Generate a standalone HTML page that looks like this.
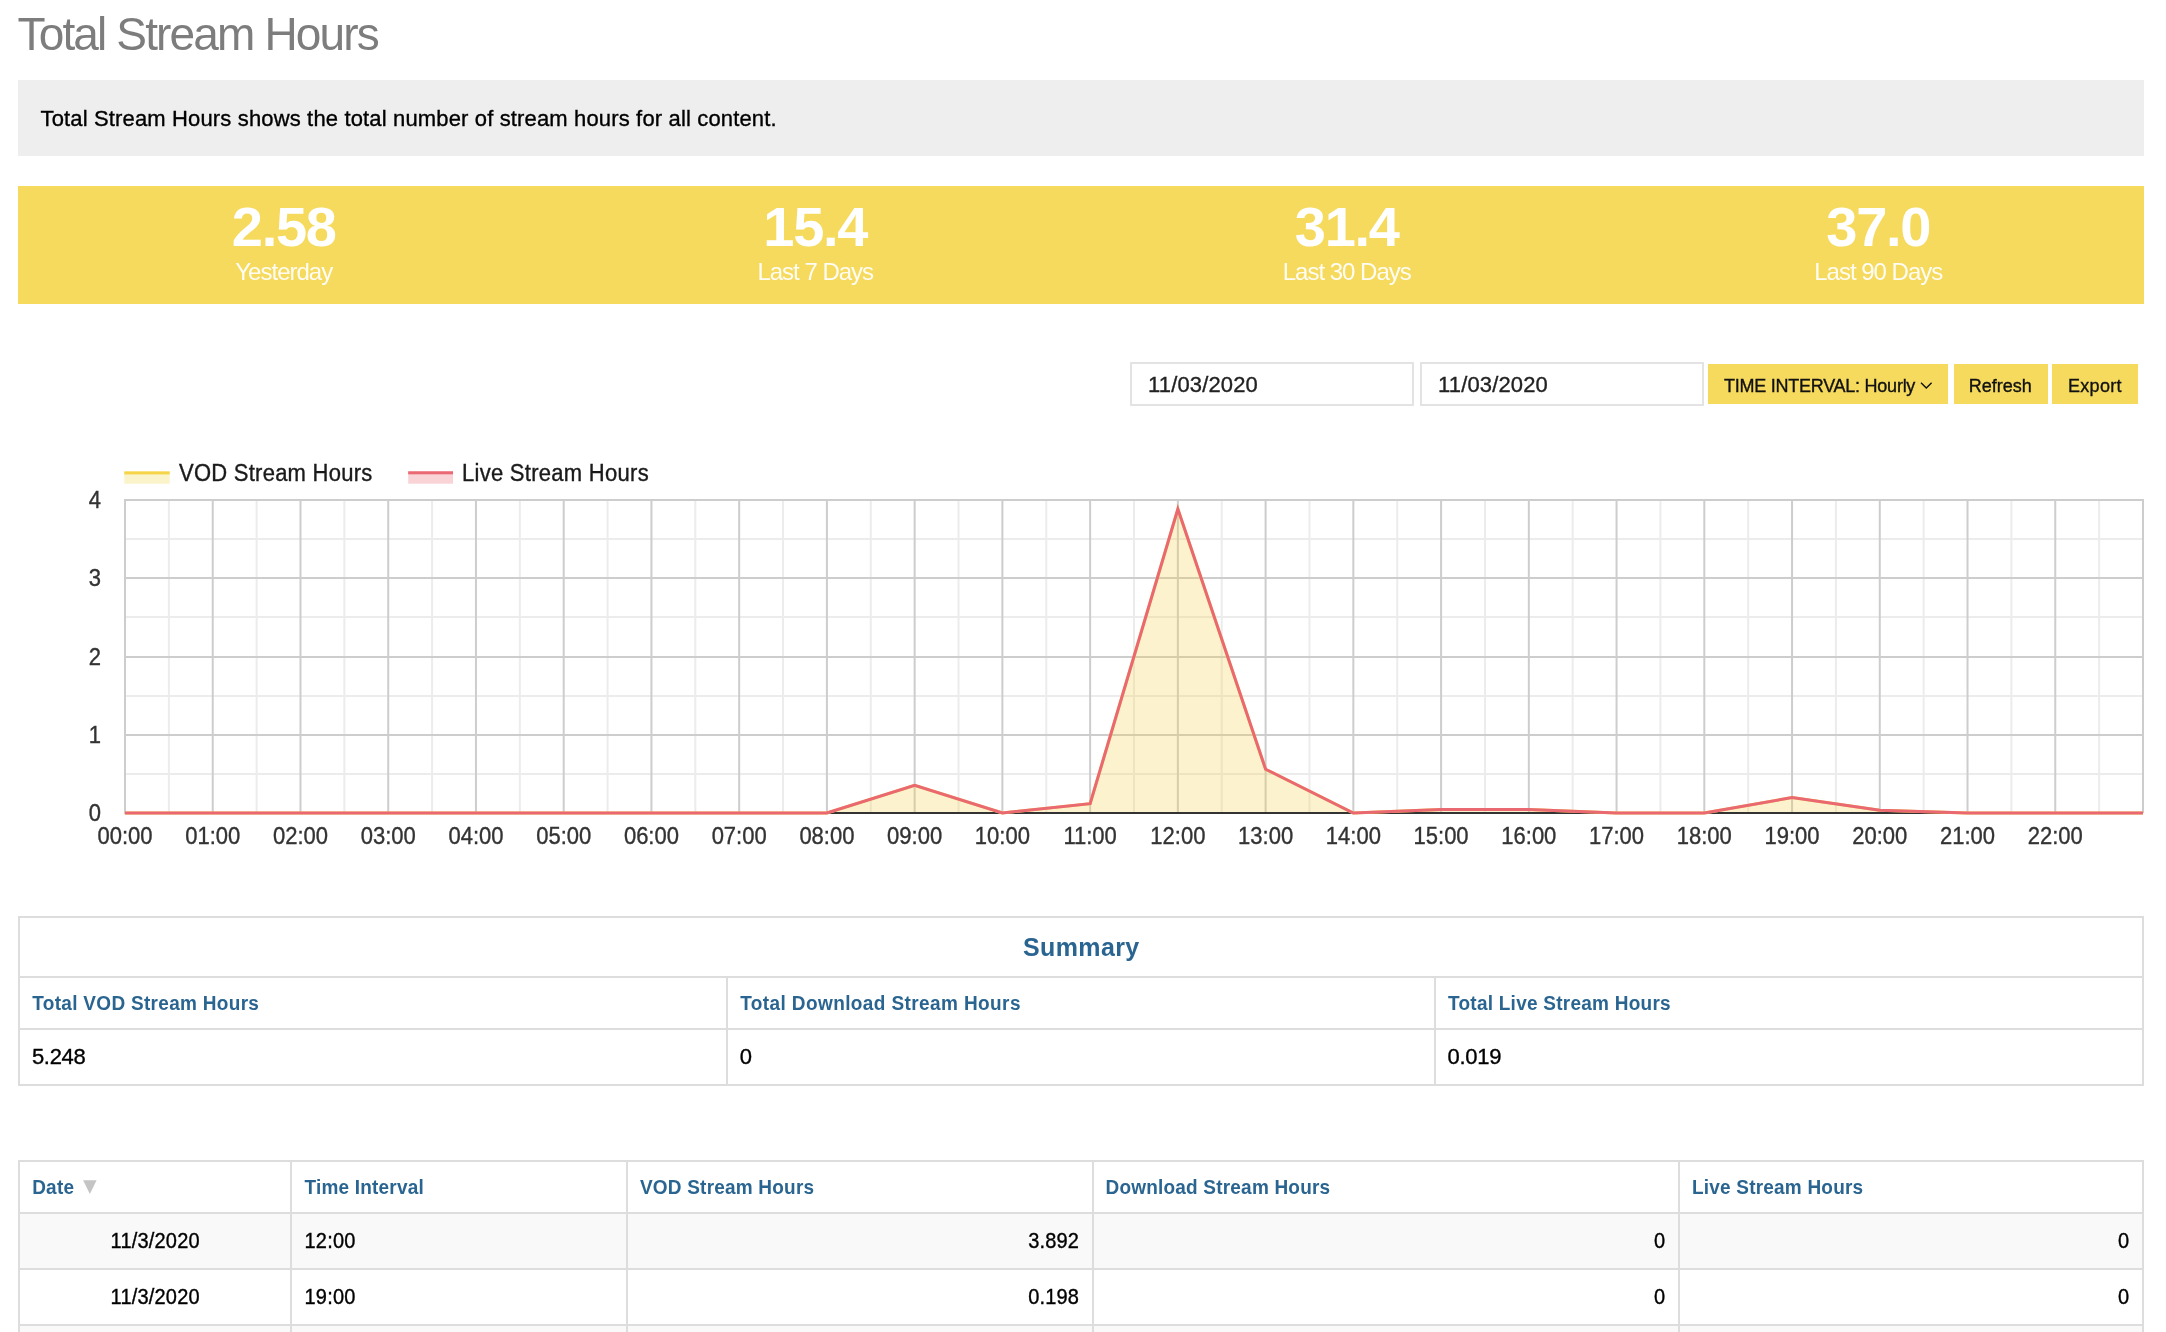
<!DOCTYPE html>
<html><head><meta charset="utf-8"><title>Total Stream Hours</title>
<style>
html,body{margin:0;padding:0;background:#fff;}
body{will-change:transform;width:2166px;height:1332px;position:relative;overflow:hidden;font-family:"Liberation Sans",sans-serif;}
.t{position:absolute;white-space:nowrap;}
.k{-webkit-text-stroke:0.35px currentColor;}
.r{position:absolute;}
svg{position:absolute;left:0;top:0;}
</style></head><body>
<div class="t" style="left:17.50px;top:11.06px;font-size:46px;line-height:46px;color:#7d7d7d;font-weight:normal;letter-spacing:-1.85px;">Total Stream Hours</div>
<div class="r" style="left:18px;top:80px;width:2126px;height:76px;background:#eeeeee;"></div>
<div class="t k" style="left:40.50px;top:107.58px;font-size:22px;line-height:22px;color:#000;font-weight:normal;letter-spacing:0.15px;">Total Stream Hours shows the total number of stream hours for all content.</div>
<div class="r" style="left:18px;top:186px;width:2126px;height:118px;background:#F6DA5E;"></div>
<div class="t" style="left:-316.25px;width:1200px;text-align:center;top:199.30px;font-size:56px;line-height:56px;color:#fff;font-weight:bold;letter-spacing:-1.25px;">2.58</div>
<div class="t" style="left:-316.25px;width:1200px;text-align:center;top:259.68px;font-size:24px;line-height:24px;color:rgba(255,255,255,0.93);font-weight:normal;letter-spacing:-1px;">Yesterday</div>
<div class="t" style="left:215.25px;width:1200px;text-align:center;top:199.30px;font-size:56px;line-height:56px;color:#fff;font-weight:bold;letter-spacing:-1.25px;">15.4</div>
<div class="t" style="left:215.25px;width:1200px;text-align:center;top:259.68px;font-size:24px;line-height:24px;color:rgba(255,255,255,0.93);font-weight:normal;letter-spacing:-1px;">Last 7 Days</div>
<div class="t" style="left:746.75px;width:1200px;text-align:center;top:199.30px;font-size:56px;line-height:56px;color:#fff;font-weight:bold;letter-spacing:-1.25px;">31.4</div>
<div class="t" style="left:746.75px;width:1200px;text-align:center;top:259.68px;font-size:24px;line-height:24px;color:rgba(255,255,255,0.93);font-weight:normal;letter-spacing:-1px;">Last 30 Days</div>
<div class="t" style="left:1278.25px;width:1200px;text-align:center;top:199.30px;font-size:56px;line-height:56px;color:#fff;font-weight:bold;letter-spacing:-1.25px;">37.0</div>
<div class="t" style="left:1278.25px;width:1200px;text-align:center;top:259.68px;font-size:24px;line-height:24px;color:rgba(255,255,255,0.93);font-weight:normal;letter-spacing:-1px;">Last 90 Days</div>
<div class="r" style="left:1130px;top:362px;width:284px;height:44px;background:#fff;box-sizing:border-box;border:2px solid #e3e3e3;"></div>
<div class="t k" style="left:1148.00px;top:374.18px;font-size:22px;line-height:22px;color:#222;font-weight:normal;letter-spacing:0.15px;">11/03/2020</div>
<div class="r" style="left:1420px;top:362px;width:284px;height:44px;background:#fff;box-sizing:border-box;border:2px solid #e3e3e3;"></div>
<div class="t k" style="left:1438.00px;top:374.18px;font-size:22px;line-height:22px;color:#222;font-weight:normal;letter-spacing:0.15px;">11/03/2020</div>
<div class="r" style="left:1708px;top:364px;width:240px;height:40px;background:#F6DA5E;"></div>
<div class="t k" style="left:1724.00px;top:376.56px;font-size:18px;line-height:18px;color:#111;font-weight:normal;letter-spacing:-0.25px;">TIME INTERVAL: Hourly</div>
<svg width="2166" height="1332" style="pointer-events:none"><polyline points="1921,382.7 1926.3,388 1931.6,382.7" fill="none" stroke="#111" stroke-width="1.4"/></svg>
<div class="r" style="left:1954px;top:364px;width:94px;height:40px;background:#F6DA5E;"></div>
<div class="t k" style="left:1968.70px;top:376.56px;font-size:18px;line-height:18px;color:#111;font-weight:normal;">Refresh</div>
<div class="r" style="left:2052px;top:364px;width:86px;height:40px;background:#F6DA5E;"></div>
<div class="t k" style="left:2068.00px;top:376.56px;font-size:18px;line-height:18px;color:#111;font-weight:normal;letter-spacing:0.3px;">Export</div>
<svg width="2166" height="1332">
<line x1="168.87" y1="500" x2="168.87" y2="813" stroke="#ececec" stroke-width="2"/>
<line x1="256.61" y1="500" x2="256.61" y2="813" stroke="#ececec" stroke-width="2"/>
<line x1="344.35" y1="500" x2="344.35" y2="813" stroke="#ececec" stroke-width="2"/>
<line x1="432.09" y1="500" x2="432.09" y2="813" stroke="#ececec" stroke-width="2"/>
<line x1="519.83" y1="500" x2="519.83" y2="813" stroke="#ececec" stroke-width="2"/>
<line x1="607.57" y1="500" x2="607.57" y2="813" stroke="#ececec" stroke-width="2"/>
<line x1="695.30" y1="500" x2="695.30" y2="813" stroke="#ececec" stroke-width="2"/>
<line x1="783.04" y1="500" x2="783.04" y2="813" stroke="#ececec" stroke-width="2"/>
<line x1="870.78" y1="500" x2="870.78" y2="813" stroke="#ececec" stroke-width="2"/>
<line x1="958.52" y1="500" x2="958.52" y2="813" stroke="#ececec" stroke-width="2"/>
<line x1="1046.26" y1="500" x2="1046.26" y2="813" stroke="#ececec" stroke-width="2"/>
<line x1="1134.00" y1="500" x2="1134.00" y2="813" stroke="#ececec" stroke-width="2"/>
<line x1="1221.74" y1="500" x2="1221.74" y2="813" stroke="#ececec" stroke-width="2"/>
<line x1="1309.48" y1="500" x2="1309.48" y2="813" stroke="#ececec" stroke-width="2"/>
<line x1="1397.22" y1="500" x2="1397.22" y2="813" stroke="#ececec" stroke-width="2"/>
<line x1="1484.96" y1="500" x2="1484.96" y2="813" stroke="#ececec" stroke-width="2"/>
<line x1="1572.70" y1="500" x2="1572.70" y2="813" stroke="#ececec" stroke-width="2"/>
<line x1="1660.43" y1="500" x2="1660.43" y2="813" stroke="#ececec" stroke-width="2"/>
<line x1="1748.17" y1="500" x2="1748.17" y2="813" stroke="#ececec" stroke-width="2"/>
<line x1="1835.91" y1="500" x2="1835.91" y2="813" stroke="#ececec" stroke-width="2"/>
<line x1="1923.65" y1="500" x2="1923.65" y2="813" stroke="#ececec" stroke-width="2"/>
<line x1="2011.39" y1="500" x2="2011.39" y2="813" stroke="#ececec" stroke-width="2"/>
<line x1="2099.13" y1="500" x2="2099.13" y2="813" stroke="#ececec" stroke-width="2"/>
<line x1="125" y1="774.00" x2="2143" y2="774.00" stroke="#ececec" stroke-width="2"/>
<line x1="125" y1="696.00" x2="2143" y2="696.00" stroke="#ececec" stroke-width="2"/>
<line x1="125" y1="617.00" x2="2143" y2="617.00" stroke="#ececec" stroke-width="2"/>
<line x1="125" y1="539.00" x2="2143" y2="539.00" stroke="#ececec" stroke-width="2"/>
<line x1="125.00" y1="499" x2="125.00" y2="813" stroke="#cdcdcd" stroke-width="2"/>
<line x1="212.74" y1="499" x2="212.74" y2="813" stroke="#cdcdcd" stroke-width="2"/>
<line x1="300.48" y1="499" x2="300.48" y2="813" stroke="#cdcdcd" stroke-width="2"/>
<line x1="388.22" y1="499" x2="388.22" y2="813" stroke="#cdcdcd" stroke-width="2"/>
<line x1="475.96" y1="499" x2="475.96" y2="813" stroke="#cdcdcd" stroke-width="2"/>
<line x1="563.70" y1="499" x2="563.70" y2="813" stroke="#cdcdcd" stroke-width="2"/>
<line x1="651.43" y1="499" x2="651.43" y2="813" stroke="#cdcdcd" stroke-width="2"/>
<line x1="739.17" y1="499" x2="739.17" y2="813" stroke="#cdcdcd" stroke-width="2"/>
<line x1="826.91" y1="499" x2="826.91" y2="813" stroke="#cdcdcd" stroke-width="2"/>
<line x1="914.65" y1="499" x2="914.65" y2="813" stroke="#cdcdcd" stroke-width="2"/>
<line x1="1002.39" y1="499" x2="1002.39" y2="813" stroke="#cdcdcd" stroke-width="2"/>
<line x1="1090.13" y1="499" x2="1090.13" y2="813" stroke="#cdcdcd" stroke-width="2"/>
<line x1="1177.87" y1="499" x2="1177.87" y2="813" stroke="#cdcdcd" stroke-width="2"/>
<line x1="1265.61" y1="499" x2="1265.61" y2="813" stroke="#cdcdcd" stroke-width="2"/>
<line x1="1353.35" y1="499" x2="1353.35" y2="813" stroke="#cdcdcd" stroke-width="2"/>
<line x1="1441.09" y1="499" x2="1441.09" y2="813" stroke="#cdcdcd" stroke-width="2"/>
<line x1="1528.83" y1="499" x2="1528.83" y2="813" stroke="#cdcdcd" stroke-width="2"/>
<line x1="1616.57" y1="499" x2="1616.57" y2="813" stroke="#cdcdcd" stroke-width="2"/>
<line x1="1704.30" y1="499" x2="1704.30" y2="813" stroke="#cdcdcd" stroke-width="2"/>
<line x1="1792.04" y1="499" x2="1792.04" y2="813" stroke="#cdcdcd" stroke-width="2"/>
<line x1="1879.78" y1="499" x2="1879.78" y2="813" stroke="#cdcdcd" stroke-width="2"/>
<line x1="1967.52" y1="499" x2="1967.52" y2="813" stroke="#cdcdcd" stroke-width="2"/>
<line x1="2055.26" y1="499" x2="2055.26" y2="813" stroke="#cdcdcd" stroke-width="2"/>
<line x1="2143.00" y1="499" x2="2143.00" y2="813" stroke="#cdcdcd" stroke-width="2"/>
<line x1="124" y1="813.00" x2="2143" y2="813.00" stroke="#cdcdcd" stroke-width="2"/>
<line x1="124" y1="735.00" x2="2143" y2="735.00" stroke="#cdcdcd" stroke-width="2"/>
<line x1="124" y1="657.00" x2="2143" y2="657.00" stroke="#cdcdcd" stroke-width="2"/>
<line x1="124" y1="578.00" x2="2143" y2="578.00" stroke="#cdcdcd" stroke-width="2"/>
<line x1="124" y1="500.00" x2="2143" y2="500.00" stroke="#cdcdcd" stroke-width="2"/>
<polygon points="125,813 125.00,813.00 212.74,813.00 300.48,813.00 388.22,813.00 475.96,813.00 563.70,813.00 651.43,813.00 739.17,813.00 826.91,813.00 914.65,785.27 1002.39,813.00 1090.13,803.63 1177.87,509.03 1265.61,769.26 1353.35,813.00 1441.09,809.49 1528.83,809.49 1616.57,813.00 1704.30,813.00 1792.04,797.54 1879.78,810.27 1967.52,813.00 2055.26,813.00 2143.00,813.00 2143,813" fill="rgba(245,212,74,0.27)"/>
<line x1="125" y1="813" x2="2143" y2="813" stroke="#333" stroke-width="1.8"/>
<polyline points="125.00,813.00 212.74,813.00 300.48,813.00 388.22,813.00 475.96,813.00 563.70,813.00 651.43,813.00 739.17,813.00 826.91,813.00 914.65,785.27 1002.39,813.00 1090.13,803.63 1177.87,509.03 1265.61,769.26 1353.35,813.00 1441.09,809.49 1528.83,809.49 1616.57,813.00 1704.30,813.00 1792.04,797.54 1879.78,810.27 1967.52,813.00 2055.26,813.00 2143.00,813.00" fill="none" stroke="#F5D44A" stroke-width="3"/>
<polyline points="125.00,813.00 212.74,813.00 300.48,813.00 388.22,813.00 475.96,813.00 563.70,813.00 651.43,813.00 739.17,813.00 826.91,813.00 914.65,785.27 1002.39,813.00 1090.13,803.63 1177.87,509.03 1265.61,769.26 1353.35,813.00 1441.09,809.49 1528.83,809.49 1616.57,813.00 1704.30,813.00 1792.04,797.54 1879.78,810.27 1967.52,813.00 2055.26,813.00 2143.00,813.00" fill="none" stroke="#EA6871" stroke-width="3" stroke-linejoin="miter"/>
<rect x="124.3" y="471.4" width="45.4" height="12.3" fill="#FBF3C9"/>
<rect x="124.3" y="471.4" width="45.4" height="3" fill="#F5D44A"/>
<rect x="408.2" y="471.3" width="44.8" height="12.4" fill="#FAD3D7"/>
<rect x="408.2" y="471.3" width="44.8" height="3" fill="#EB6972"/>
</svg>
<div class="t k" style="left:179.00px;top:463.38px;font-size:22px;line-height:22px;color:#1a1a1a;font-weight:normal;letter-spacing:0.25px;transform:scaleY(1.05);transform-origin:0 18.62px;">VOD Stream Hours</div>
<div class="t k" style="left:462.00px;top:463.38px;font-size:22px;line-height:22px;color:#1a1a1a;font-weight:normal;letter-spacing:0.28px;transform:scaleY(1.05);transform-origin:0 18.62px;">Live Stream Hours</div>
<div class="t k" style="left:-1099.00px;width:1200px;text-align:right;top:803.18px;font-size:22px;line-height:22px;color:#333;font-weight:normal;transform:scaleY(1.08);transform-origin:0 18.62px;">0</div>
<div class="t k" style="left:-1099.00px;width:1200px;text-align:right;top:725.18px;font-size:22px;line-height:22px;color:#333;font-weight:normal;transform:scaleY(1.08);transform-origin:0 18.62px;">1</div>
<div class="t k" style="left:-1099.00px;width:1200px;text-align:right;top:647.18px;font-size:22px;line-height:22px;color:#333;font-weight:normal;transform:scaleY(1.08);transform-origin:0 18.62px;">2</div>
<div class="t k" style="left:-1099.00px;width:1200px;text-align:right;top:568.18px;font-size:22px;line-height:22px;color:#333;font-weight:normal;transform:scaleY(1.08);transform-origin:0 18.62px;">3</div>
<div class="t k" style="left:-1099.00px;width:1200px;text-align:right;top:490.18px;font-size:22px;line-height:22px;color:#333;font-weight:normal;transform:scaleY(1.08);transform-origin:0 18.62px;">4</div>
<div class="t k" style="left:-475.00px;width:1200px;text-align:center;top:825.58px;font-size:22px;line-height:22px;color:#333;font-weight:normal;transform:scaleY(1.07);transform-origin:0 18.62px;">00:00</div>
<div class="t k" style="left:-387.26px;width:1200px;text-align:center;top:825.58px;font-size:22px;line-height:22px;color:#333;font-weight:normal;transform:scaleY(1.07);transform-origin:0 18.62px;">01:00</div>
<div class="t k" style="left:-299.52px;width:1200px;text-align:center;top:825.58px;font-size:22px;line-height:22px;color:#333;font-weight:normal;transform:scaleY(1.07);transform-origin:0 18.62px;">02:00</div>
<div class="t k" style="left:-211.78px;width:1200px;text-align:center;top:825.58px;font-size:22px;line-height:22px;color:#333;font-weight:normal;transform:scaleY(1.07);transform-origin:0 18.62px;">03:00</div>
<div class="t k" style="left:-124.04px;width:1200px;text-align:center;top:825.58px;font-size:22px;line-height:22px;color:#333;font-weight:normal;transform:scaleY(1.07);transform-origin:0 18.62px;">04:00</div>
<div class="t k" style="left:-36.30px;width:1200px;text-align:center;top:825.58px;font-size:22px;line-height:22px;color:#333;font-weight:normal;transform:scaleY(1.07);transform-origin:0 18.62px;">05:00</div>
<div class="t k" style="left:51.43px;width:1200px;text-align:center;top:825.58px;font-size:22px;line-height:22px;color:#333;font-weight:normal;transform:scaleY(1.07);transform-origin:0 18.62px;">06:00</div>
<div class="t k" style="left:139.17px;width:1200px;text-align:center;top:825.58px;font-size:22px;line-height:22px;color:#333;font-weight:normal;transform:scaleY(1.07);transform-origin:0 18.62px;">07:00</div>
<div class="t k" style="left:226.91px;width:1200px;text-align:center;top:825.58px;font-size:22px;line-height:22px;color:#333;font-weight:normal;transform:scaleY(1.07);transform-origin:0 18.62px;">08:00</div>
<div class="t k" style="left:314.65px;width:1200px;text-align:center;top:825.58px;font-size:22px;line-height:22px;color:#333;font-weight:normal;transform:scaleY(1.07);transform-origin:0 18.62px;">09:00</div>
<div class="t k" style="left:402.39px;width:1200px;text-align:center;top:825.58px;font-size:22px;line-height:22px;color:#333;font-weight:normal;transform:scaleY(1.07);transform-origin:0 18.62px;">10:00</div>
<div class="t k" style="left:490.13px;width:1200px;text-align:center;top:825.58px;font-size:22px;line-height:22px;color:#333;font-weight:normal;transform:scaleY(1.07);transform-origin:0 18.62px;">11:00</div>
<div class="t k" style="left:577.87px;width:1200px;text-align:center;top:825.58px;font-size:22px;line-height:22px;color:#333;font-weight:normal;transform:scaleY(1.07);transform-origin:0 18.62px;">12:00</div>
<div class="t k" style="left:665.61px;width:1200px;text-align:center;top:825.58px;font-size:22px;line-height:22px;color:#333;font-weight:normal;transform:scaleY(1.07);transform-origin:0 18.62px;">13:00</div>
<div class="t k" style="left:753.35px;width:1200px;text-align:center;top:825.58px;font-size:22px;line-height:22px;color:#333;font-weight:normal;transform:scaleY(1.07);transform-origin:0 18.62px;">14:00</div>
<div class="t k" style="left:841.09px;width:1200px;text-align:center;top:825.58px;font-size:22px;line-height:22px;color:#333;font-weight:normal;transform:scaleY(1.07);transform-origin:0 18.62px;">15:00</div>
<div class="t k" style="left:928.83px;width:1200px;text-align:center;top:825.58px;font-size:22px;line-height:22px;color:#333;font-weight:normal;transform:scaleY(1.07);transform-origin:0 18.62px;">16:00</div>
<div class="t k" style="left:1016.57px;width:1200px;text-align:center;top:825.58px;font-size:22px;line-height:22px;color:#333;font-weight:normal;transform:scaleY(1.07);transform-origin:0 18.62px;">17:00</div>
<div class="t k" style="left:1104.30px;width:1200px;text-align:center;top:825.58px;font-size:22px;line-height:22px;color:#333;font-weight:normal;transform:scaleY(1.07);transform-origin:0 18.62px;">18:00</div>
<div class="t k" style="left:1192.04px;width:1200px;text-align:center;top:825.58px;font-size:22px;line-height:22px;color:#333;font-weight:normal;transform:scaleY(1.07);transform-origin:0 18.62px;">19:00</div>
<div class="t k" style="left:1279.78px;width:1200px;text-align:center;top:825.58px;font-size:22px;line-height:22px;color:#333;font-weight:normal;transform:scaleY(1.07);transform-origin:0 18.62px;">20:00</div>
<div class="t k" style="left:1367.52px;width:1200px;text-align:center;top:825.58px;font-size:22px;line-height:22px;color:#333;font-weight:normal;transform:scaleY(1.07);transform-origin:0 18.62px;">21:00</div>
<div class="t k" style="left:1455.26px;width:1200px;text-align:center;top:825.58px;font-size:22px;line-height:22px;color:#333;font-weight:normal;transform:scaleY(1.07);transform-origin:0 18.62px;">22:00</div>
<div class="r" style="left:18px;top:916px;width:2126px;height:170px;box-sizing:border-box;border:2px solid #dddddd;"></div>
<div class="r" style="left:18px;top:976px;width:2126px;height:2px;background:#dddddd;"></div>
<div class="r" style="left:18px;top:1028px;width:2126px;height:2px;background:#dddddd;"></div>
<div class="r" style="left:726px;top:976px;width:2px;height:110px;background:#dddddd;"></div>
<div class="r" style="left:1434px;top:976px;width:2px;height:110px;background:#dddddd;"></div>
<div class="t" style="left:481.30px;width:1200px;text-align:center;top:934.64px;font-size:25px;line-height:25px;color:#2A6591;font-weight:bold;letter-spacing:0.4px;transform:scaleY(1.05);transform-origin:0 21.16px;">Summary</div>
<div class="t" style="left:32.30px;top:993.92px;font-size:19px;line-height:19px;color:#2A6591;font-weight:bold;letter-spacing:0.3px;transform:scaleY(1.08);transform-origin:0 16.08px;">Total VOD Stream Hours</div>
<div class="t k" style="left:31.90px;top:1046.18px;font-size:22px;line-height:22px;color:#000;font-weight:normal;letter-spacing:-0.3px;">5.248</div>
<div class="t" style="left:740.20px;top:993.92px;font-size:19px;line-height:19px;color:#2A6591;font-weight:bold;letter-spacing:0.4px;transform:scaleY(1.08);transform-origin:0 16.08px;">Total Download Stream Hours</div>
<div class="t k" style="left:739.80px;top:1046.18px;font-size:22px;line-height:22px;color:#000;font-weight:normal;letter-spacing:-0.3px;">0</div>
<div class="t" style="left:1448.00px;top:993.92px;font-size:19px;line-height:19px;color:#2A6591;font-weight:bold;letter-spacing:0.25px;transform:scaleY(1.08);transform-origin:0 16.08px;">Total Live Stream Hours</div>
<div class="t k" style="left:1447.60px;top:1046.18px;font-size:22px;line-height:22px;color:#000;font-weight:normal;letter-spacing:-0.3px;">0.019</div>
<div class="r" style="left:18px;top:1160px;width:2126px;height:180px;box-sizing:border-box;border:2px solid #dddddd;"></div>
<div class="r" style="left:20px;top:1214px;width:2122px;height:54px;background:#f9f9f9;"></div>
<div class="r" style="left:18px;top:1212px;width:2126px;height:2px;background:#dddddd;"></div>
<div class="r" style="left:18px;top:1268px;width:2126px;height:2px;background:#dddddd;"></div>
<div class="r" style="left:18px;top:1324px;width:2126px;height:2px;background:#dddddd;"></div>
<div class="r" style="left:20px;top:1326px;width:2122px;height:14px;background:#f9f9f9;"></div>
<div class="r" style="left:290px;top:1160px;width:2px;height:180px;background:#dddddd;"></div>
<div class="r" style="left:626px;top:1160px;width:2px;height:180px;background:#dddddd;"></div>
<div class="r" style="left:1092px;top:1160px;width:2px;height:180px;background:#dddddd;"></div>
<div class="r" style="left:1678px;top:1160px;width:2px;height:180px;background:#dddddd;"></div>
<div class="t" style="left:32.20px;top:1177.82px;font-size:19px;line-height:19px;color:#2A6591;font-weight:bold;letter-spacing:0.2px;transform:scaleY(1.07);transform-origin:0 16.08px;">Date</div>
<div class="t" style="left:304.50px;top:1177.82px;font-size:19px;line-height:19px;color:#2A6591;font-weight:bold;letter-spacing:0.2px;transform:scaleY(1.07);transform-origin:0 16.08px;">Time Interval</div>
<div class="t" style="left:640.00px;top:1177.82px;font-size:19px;line-height:19px;color:#2A6591;font-weight:bold;letter-spacing:0.2px;transform:scaleY(1.07);transform-origin:0 16.08px;">VOD Stream Hours</div>
<div class="t" style="left:1105.50px;top:1177.82px;font-size:19px;line-height:19px;color:#2A6591;font-weight:bold;letter-spacing:0.2px;transform:scaleY(1.07);transform-origin:0 16.08px;">Download Stream Hours</div>
<div class="t" style="left:1692.00px;top:1177.82px;font-size:19px;line-height:19px;color:#2A6591;font-weight:bold;letter-spacing:0.2px;transform:scaleY(1.07);transform-origin:0 16.08px;">Live Stream Hours</div>
<svg width="2166" height="1332"><polygon points="83.1,1180.3 96.6,1180.3 89.85,1194" fill="#c4c4c4"/></svg>
<div class="t k" style="left:-444.80px;width:1200px;text-align:center;top:1231.07px;font-size:20px;line-height:20px;color:#000;font-weight:normal;letter-spacing:0.2px;transform:scaleY(1.08);transform-origin:0 16.93px;">11/3/2020</div>
<div class="t k" style="left:304.50px;top:1231.07px;font-size:20px;line-height:20px;color:#000;font-weight:normal;letter-spacing:0.2px;transform:scaleY(1.08);transform-origin:0 16.93px;">12:00</div>
<div class="t k" style="left:-120.80px;width:1200px;text-align:right;top:1231.07px;font-size:20px;line-height:20px;color:#000;font-weight:normal;letter-spacing:0.2px;transform:scaleY(1.08);transform-origin:0 16.93px;">3.892</div>
<div class="t k" style="left:465.20px;width:1200px;text-align:right;top:1231.07px;font-size:20px;line-height:20px;color:#000;font-weight:normal;transform:scaleY(1.08);transform-origin:0 16.93px;">0</div>
<div class="t k" style="left:929.20px;width:1200px;text-align:right;top:1231.07px;font-size:20px;line-height:20px;color:#000;font-weight:normal;transform:scaleY(1.08);transform-origin:0 16.93px;">0</div>
<div class="t k" style="left:-444.80px;width:1200px;text-align:center;top:1287.07px;font-size:20px;line-height:20px;color:#000;font-weight:normal;letter-spacing:0.2px;transform:scaleY(1.08);transform-origin:0 16.93px;">11/3/2020</div>
<div class="t k" style="left:304.50px;top:1287.07px;font-size:20px;line-height:20px;color:#000;font-weight:normal;letter-spacing:0.2px;transform:scaleY(1.08);transform-origin:0 16.93px;">19:00</div>
<div class="t k" style="left:-120.80px;width:1200px;text-align:right;top:1287.07px;font-size:20px;line-height:20px;color:#000;font-weight:normal;letter-spacing:0.2px;transform:scaleY(1.08);transform-origin:0 16.93px;">0.198</div>
<div class="t k" style="left:465.20px;width:1200px;text-align:right;top:1287.07px;font-size:20px;line-height:20px;color:#000;font-weight:normal;transform:scaleY(1.08);transform-origin:0 16.93px;">0</div>
<div class="t k" style="left:929.20px;width:1200px;text-align:right;top:1287.07px;font-size:20px;line-height:20px;color:#000;font-weight:normal;transform:scaleY(1.08);transform-origin:0 16.93px;">0</div>
</body></html>
